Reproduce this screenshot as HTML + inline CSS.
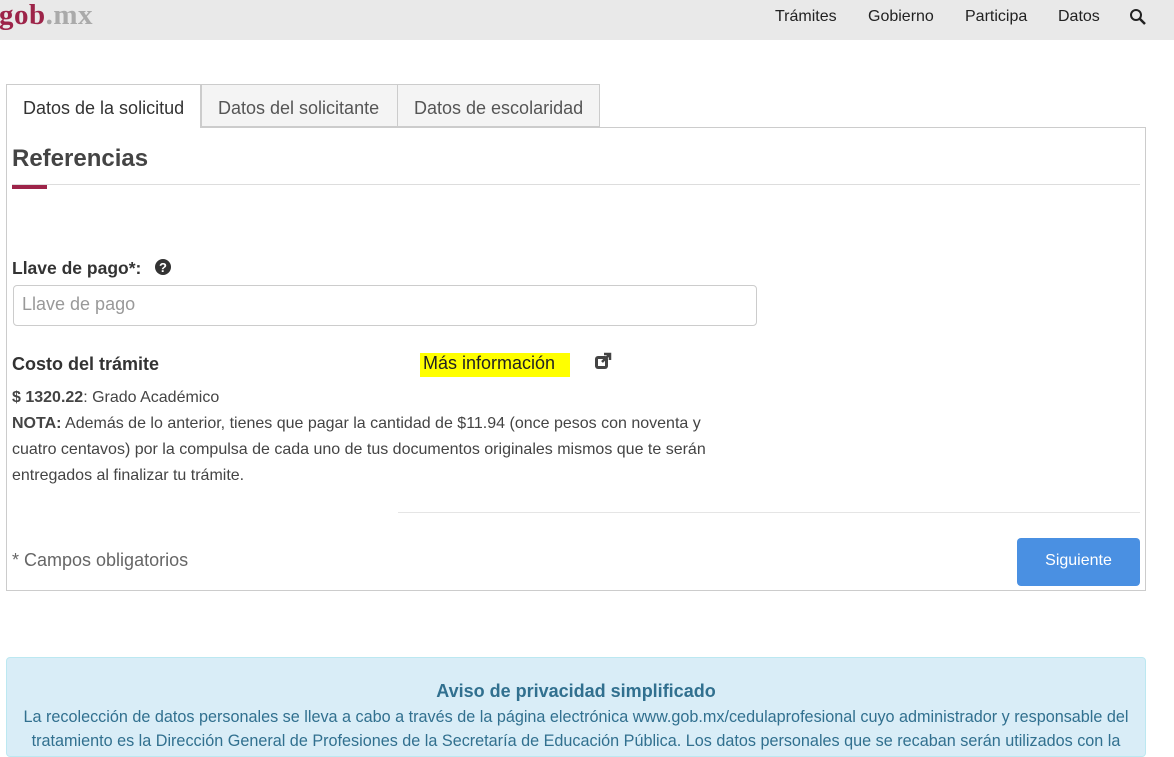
<!DOCTYPE html>
<html><head><meta charset="utf-8"><style>
*{box-sizing:border-box;margin:0;padding:0}
body{width:1174px;height:746px;overflow:hidden;background:#fff;font-family:"Liberation Sans",sans-serif;color:#333;position:relative}
.a{position:absolute;white-space:nowrap}
</style></head><body>
<div class="a" style="left:0;top:0;width:1174px;height:40px;background:#e9e9e9"></div>
<div class="a" style="left:-1px;top:-1px;font-family:'Liberation Serif',serif;font-weight:bold;font-size:29px;color:#9d2449;letter-spacing:0.5px">gob<span style="color:#aaa">.mx</span></div>
<div class="a" style="left:775px;top:8px;font-size:16px;color:#222">Trámites</div>
<div class="a" style="left:868px;top:8px;font-size:16px;color:#222">Gobierno</div>
<div class="a" style="left:965px;top:8px;font-size:16px;color:#222">Participa</div>
<div class="a" style="left:1058px;top:8px;font-size:16px;color:#222">Datos</div>
<svg class="a" style="left:1129px;top:8px" width="18" height="18"><circle cx="7" cy="7" r="5" fill="none" stroke="#222" stroke-width="2"/><path d="M11 11l5 5" stroke="#222" stroke-width="2.5"/></svg>
<div class="a" style="left:6px;top:127px;width:1140px;height:464px;border:1px solid #ccc"></div>
<div class="a" style="left:6px;top:84px;width:195px;height:44px;border:1px solid #ccc;border-bottom:none;background:#fff;font-size:18px;padding:13px 0 0 16px;color:#333">Datos de la solicitud</div>
<div class="a" style="left:201px;top:84px;width:197px;height:43px;border:1px solid #ccc;background:#f4f4f4;font-size:18px;padding:13px 0 0 16px;color:#555">Datos del solicitante</div>
<div class="a" style="left:397px;top:84px;width:203px;height:43px;border:1px solid #ccc;background:#f4f4f4;font-size:18px;padding:13px 0 0 16px;color:#555">Datos de escolaridad</div>
<div class="a" style="left:12px;top:145px;font-size:24px;font-weight:bold;color:#444">Referencias</div>
<div class="a" style="left:12px;top:184px;width:1128px;height:1px;background:#ddd"></div>
<div class="a" style="left:12px;top:185px;width:35px;height:4px;background:#9d2449"></div>
<div class="a" style="left:12px;top:258px;font-size:17.5px;font-weight:bold">Llave de pago*:</div>
<svg class="a" style="left:154px;top:258px" width="18" height="18"><circle cx="9" cy="9" r="8" fill="#333"/><text x="9" y="14" font-size="13" font-weight="bold" text-anchor="middle" fill="#fff" font-family="Liberation Sans">?</text></svg>
<div class="a" style="left:13px;top:285px;width:744px;height:41px;border:1px solid #ccc;border-radius:4px;font-size:18px;color:#999;padding:8px 0 0 8px">Llave de pago</div>
<div class="a" style="left:12px;top:354px;font-size:18px;font-weight:bold">Costo del trámite</div>
<div class="a" style="left:420px;top:353px;width:150px;height:24px;background:#ff0"></div>
<div class="a" style="left:423px;top:353px;font-size:18px;color:#222">Más información</div>
<svg class="a" style="left:593px;top:352px" width="19" height="19"><rect x="2" y="4" width="13" height="13" rx="3" fill="#444"/><rect x="5" y="7" width="7" height="7" fill="#fff"/><path d="M9 10l7-7M11 2h6v6" stroke="#444" stroke-width="2.5" fill="none"/></svg>
<div class="a" style="left:12px;top:385px;font-size:16px;line-height:26px;color:#444"><b>$ 1320.22</b>: Grado Académico<br><b>NOTA:</b> Además de lo anterior, tienes que pagar la cantidad de $11.94 (once pesos con noventa y<br>cuatro centavos) por la compulsa de cada uno de tus documentos originales mismos que te serán<br>entregados al finalizar tu trámite.</div>
<div class="a" style="left:398px;top:512px;width:742px;height:1px;background:#e5e5e5"></div>
<div class="a" style="left:12px;top:550px;font-size:18px;color:#666">* Campos obligatorios</div>
<div class="a" style="left:1017px;top:538px;width:123px;height:48px;background:#4a90e2;border-radius:4px;color:#fff;font-size:16px;text-align:center;line-height:46px">Siguiente</div>
<div class="a" style="left:6px;top:657px;width:1140px;height:100px;background:#d9edf7;border:1px solid #bce8f1;border-radius:4px"></div>
<div class="a" style="left:6px;top:681px;width:1140px;text-align:center;font-size:18px;font-weight:bold;color:#31708f">Aviso de privacidad simplificado</div>
<div class="a" style="left:14px;top:705px;width:1124px;text-align:center;font-size:16.2px;line-height:24px;color:#31708f;white-space:normal">La recolección de datos personales se lleva a cabo a través de la página electrónica www.gob.mx/cedulaprofesional cuyo administrador y responsable del tratamiento es la Dirección General de Profesiones de la Secretaría de Educación Pública. Los datos personales que se recaban serán utilizados con la</div>
</body></html>
